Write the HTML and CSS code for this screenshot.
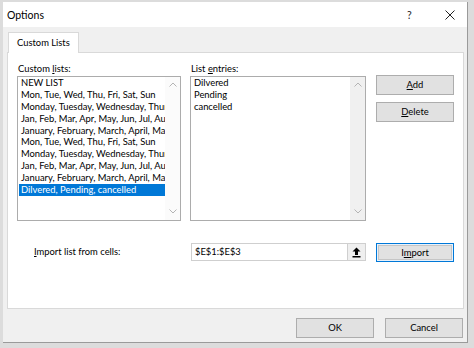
FILE: index.html
```html
<!DOCTYPE html>
<html>
<head>
<meta charset="utf-8">
<link rel="stylesheet" href="styles.css">
</head>
<body>
<div class="window">
  <div class="titlebar">
    <span class="title">Options</span>
    <span class="help">?</span>
    <span class="close"><svg width="10" height="10" viewBox="0 0 10 10"><path d="M0.5 0.5 L9.5 9.5 M9.5 0.5 L0.5 9.5" stroke="#222" stroke-width="1" fill="none"/></svg></span>
  </div>
  <div class="content">
    <div class="tabs"><div class="tab">Custom Lists</div></div>
    <div class="panel">
      <div class="row top">
        <div class="col1">
          <div class="label">Custom <u>l</u>ists:</div>
          <div class="listbox custom">
            <div class="items">
              <div class="item">NEW LIST</div>
              <div class="item">Mon, Tue, Wed, Thu, Fri, Sat, Sun</div>
              <div class="item">Monday, Tuesday, Wednesday, Thursday, Friday, Saturday, Sunday</div>
              <div class="item">Jan, Feb, Mar, Apr, May, Jun, Jul, Aug, Sep, Oct, Nov, Dec</div>
              <div class="item">January, February, March, April, May, June, July</div>
              <div class="item">Mon, Tue, Wed, Thu, Fri, Sat, Sun</div>
              <div class="item">Monday, Tuesday, Wednesday, Thursday, Friday, Saturday, Sunday</div>
              <div class="item">Jan, Feb, Mar, Apr, May, Jun, Jul, Aug, Sep, Oct, Nov, Dec</div>
              <div class="item">January, February, March, April, May, June, July</div>
              <div class="item selected">Dilvered, Pending, cancelled</div>
            </div>
            <div class="scroll light">
              <svg width="8" height="5" viewBox="0 0 8 5"><path d="M0.5 4.5 L4 1 L7.5 4.5" stroke="#b4b4b4" fill="none"/></svg>
              <svg width="8" height="5" viewBox="0 0 8 5"><path d="M0.5 0.5 L4 4 L7.5 0.5" stroke="#b4b4b4" fill="none"/></svg>
            </div>
          </div>
        </div>
        <div class="col2">
          <div class="label">List <u>e</u>ntries:</div>
          <div class="listbox entries">
            <div class="items text">
              <div class="item">Dilvered</div>
              <div class="item">Pending</div>
              <div class="item">cancelled</div>
            </div>
            <div class="scroll">
              <svg width="8" height="5" viewBox="0 0 8 5"><path d="M0.5 4.5 L4 1 L7.5 4.5" stroke="#b4b4b4" fill="none"/></svg>
              <svg width="8" height="5" viewBox="0 0 8 5"><path d="M0.5 0.5 L4 4 L7.5 0.5" stroke="#b4b4b4" fill="none"/></svg>
            </div>
          </div>
        </div>
        <div class="col3">
          <div class="btn"><u>A</u>dd</div>
          <div class="btn"><u>D</u>elete</div>
        </div>
      </div>
      <div class="row import">
        <div class="col1 importlabel"><u>I</u>mport list from cells:</div>
        <div class="col2">
          <div class="refedit">
            <span class="reftext">$E$1:$E$3</span>
            <span class="refbtn"><svg width="9" height="11" viewBox="0 0 9 11"><path d="M4.5 0.5 L8.5 4.5 L6 4.5 L6 8 L3 8 L3 4.5 L0.5 4.5 Z" fill="#000"/><rect x="0.5" y="9" width="8" height="1.5" fill="#000"/></svg></span>
          </div>
        </div>
        <div class="col3">
          <div class="btn default">I<u>m</u>port</div>
        </div>
      </div>
    </div>
    <div class="footer">
      <div class="btn">OK</div>
      <div class="btn">Cancel</div>
    </div>
  </div>
</div>
</body>
</html>
```

FILE: styles.css
```css
* { box-sizing: border-box; }
html, body { margin: 0; padding: 0; }
body {
  width: 474px;
  height: 348px;
  background: #dcdcdc;
  font-family: Lato, "Noto Sans", sans-serif;
  font-size: 9.4px;
  color: #000;
  overflow: hidden;
  padding: 2px 0 0 3px;
}
u { text-decoration: underline; text-underline-offset: 1px; }

.window {
  width: 465px;
  height: 341px;
  background: #f0f0f0;
  border-right: 1px solid #9a9a9a;
  border-bottom: 1px solid #9a9a9a;
  display: flex;
  flex-direction: column;
}
.titlebar {
  height: 25px;
  background: #fff;
  display: flex;
  align-items: center;
  padding-left: 4px;
}
.title { font-size: 10.5px; flex: 1; padding-top: 1px; }
.help { font-size: 10.5px; width: 8px; margin-right: 30px; padding-top: 1px; color: #222; }
.close { width: 10px; height: 10px; margin-right: 12px; display: flex; }

.content {
  flex: 1;
  display: flex;
  flex-direction: column;
  padding: 0 3px 0 4px;
}
.tabs {
  height: 25px;
  display: flex;
  align-items: flex-end;
  padding-left: 1px;
}
.tab {
  width: 71px;
  height: 21px;
  background: #fff;
  border: 1px solid #d9d9d9;
  border-bottom: none;
  margin-bottom: -1px;
  position: relative;
  z-index: 1;
  padding-left: 8px;
  line-height: 20px;
}
.panel {
  height: 257px;
  background: #fff;
  border: 1px solid #d9d9d9;
  padding: 8px 0 0 9px;
}
.row { display: flex; }
.col1 { width: 164px; margin-right: 9px; }
.col2 { width: 176px; margin-right: 10px; }
.col3 { width: 78px; display: flex; flex-direction: column; gap: 7px; }
.row.top .col3 { padding-top: 14px; }

.label { height: 15px; line-height: 15px; padding-left: 1px; }
.listbox {
  height: 145px;
  border: 1px solid #acacac;
  display: flex;
  background: #fff;
}
.items { flex: 1; overflow: hidden; padding-top: 0; }
.item {
  white-space: nowrap;
  overflow: hidden;
  line-height: 11.9px;
  height: 11.9px;
  padding-left: 2px;
  margin-left: 1px;
}
.item.selected { background: #0078d7; color: #fff; }
.items.text .item { margin-left: 0; padding-left: 3px; }
.scroll {
  width: 15px;
  background: #f0f0f0;
  display: flex;
  flex-direction: column;
  justify-content: space-between;
  align-items: center;
  padding: 5px 0 6px;
}
.scroll.light { background: #fbfbfb; }

.btn {
  width: 78px;
  height: 20px;
  background: #e1e1e1;
  border: 1px solid #adadad;
  text-align: center;
  line-height: 18px;
}
.btn.default {
  border: 1px solid #0078d7;
  box-shadow: inset 0 0 0 1px #e8f1fb, inset 0 0 0 2px #c5c5c5;
  height: 19px;
}

.row.import { margin-top: 22px; height: 20px; }
.importlabel { padding-left: 17px; line-height: 17px; }
.refedit {
  margin-left: 1px;
  height: 18px;
  border: 1px solid #cfcfcf;
  display: flex;
}
.reftext { flex: 1; padding-left: 3px; line-height: 16px; }
.refbtn {
  width: 18px;
  background: #efefef;
  border-left: 1px solid #cfcfcf;
  display: flex;
  align-items: center;
  justify-content: center;
}

.footer {
  height: 33px;
  display: flex;
  justify-content: flex-end;
  gap: 11px;
  padding: 9px 1px 0 0;
}
```
